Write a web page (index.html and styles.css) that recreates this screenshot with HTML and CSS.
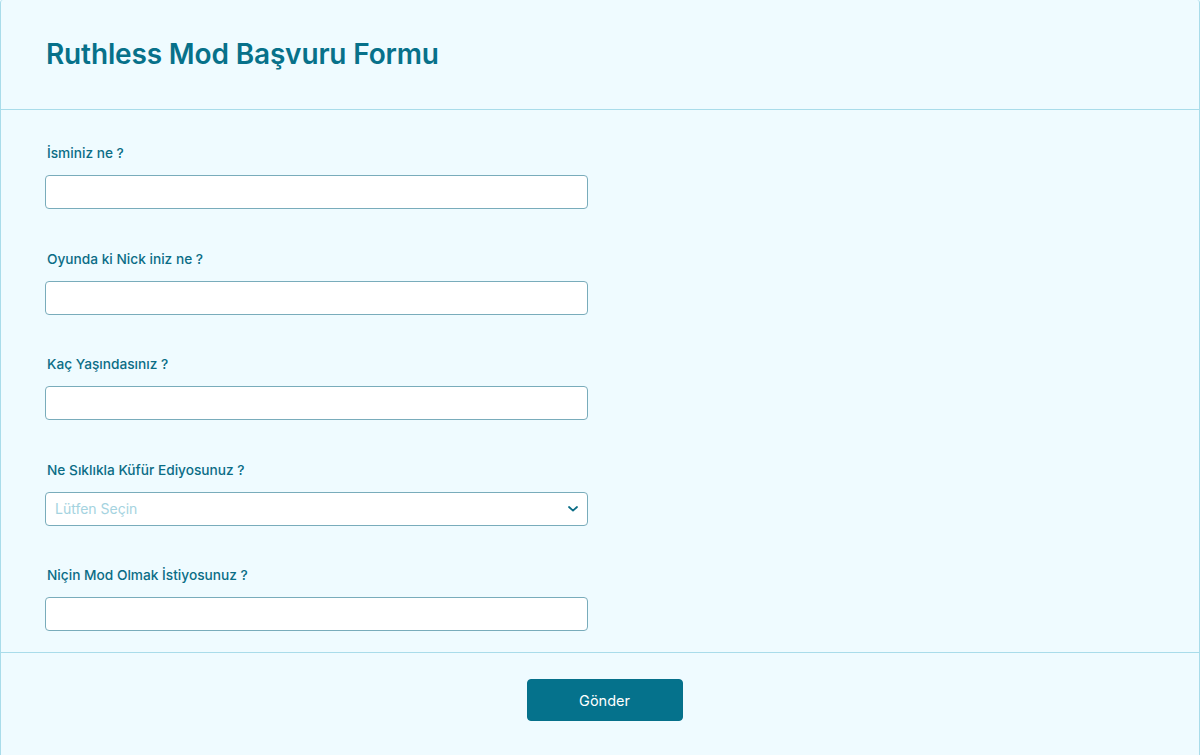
FILE: index.html
```html
<!DOCTYPE html>
<html lang="tr">
<head>
<meta charset="utf-8">
<title>Ruthless Mod Başvuru Formu</title>
<link rel="stylesheet" href="styles.css">
</head>
<body>
<div class="card">
  <header class="card-header">
    <h1 class="title">Ruthless Mod Başvuru Formu</h1>
  </header>
  <main class="card-body">
    <div class="field">
      <label class="label">İsminiz ne ?</label>
      <input class="input" type="text">
    </div>
    <div class="field">
      <label class="label">Oyunda ki Nick iniz ne ?</label>
      <input class="input" type="text">
    </div>
    <div class="field">
      <label class="label">Kaç Yaşındasınız ?</label>
      <input class="input" type="text">
    </div>
    <div class="field">
      <label class="label">Ne Sıklıkla Küfür Ediyosunuz ?</label>
      <div class="select">
        <span class="placeholder">Lütfen Seçin</span>
        <svg class="chevron" width="10" height="6" viewBox="0 0 10 6"><path d="M1 1l4 3.6L9 1" fill="none" stroke="#0b6d86" stroke-width="1.8" stroke-linecap="round" stroke-linejoin="round"/></svg>
      </div>
    </div>
    <div class="field">
      <label class="label">Niçin Mod Olmak İstiyosunuz ?</label>
      <input class="input" type="text">
    </div>
  </main>
  <footer class="card-footer">
    <button class="submit" type="button">Gönder</button>
  </footer>
</div>
</body>
</html>
```

FILE: styles.css
```css
* { box-sizing: border-box; }
html, body { margin: 0; padding: 0; }
body {
  font-family: Inter, "Noto Sans", sans-serif;
  background: #effbff;
  width: 1200px;
  height: 755px;
  overflow: hidden;
}
.card {
  height: 755px;
  border-left: 1px solid #a9dcea;
  border-right: 1px solid #a9dcea;
  border-top-left-radius: 3px;
  border-top-right-radius: 3px;
  background: #effbff;
  display: flex;
  flex-direction: column;
}
.card-header {
  height: 110px;
  border-bottom: 1px solid #a9dcea;
  padding: 0 45px;
  display: flex;
  align-items: center;
}
.title {
  margin: 0;
  font-size: 28px;
  font-weight: 600;
  color: #07718a;
  letter-spacing: -0.15px;
  padding-bottom: 1px;
}
.card-body {
  padding: 33px 44px 21px;
  display: flex;
  flex-direction: column;
  gap: 39.5px;
  border-bottom: 1px solid #a9dcea;
}
.field {
  display: flex;
  flex-direction: column;
  gap: 12px;
}
.label {
  font-size: 13.7px;
  font-weight: 500;
  line-height: 20px;
  color: #0b6d86;
  padding-left: 2px;
}
.input, .select {
  width: 543px;
  height: 34px;
  border: 1px solid #79acbb;
  border-radius: 4px;
  background: #ffffff;
  font-family: inherit;
  font-size: 14px;
  outline: none;
}
.select {
  display: flex;
  align-items: center;
  justify-content: space-between;
  padding: 0 9px 0 9px;
}
.placeholder {
  color: #a5d3e0;
  font-size: 14px;
}
.chevron { margin-top: 1px; }
.card-footer {
  flex: 1;
  display: flex;
  justify-content: center;
  padding-top: 26px;
  padding-left: 9px;
}
.submit {
  width: 156px;
  height: 42px;
  background: #05728c;
  border: 1px solid #05708a;
  border-radius: 4px;
  color: #ffffff;
  font-family: inherit;
  font-size: 14.5px;
  font-weight: 400;
  cursor: pointer;
}
```
